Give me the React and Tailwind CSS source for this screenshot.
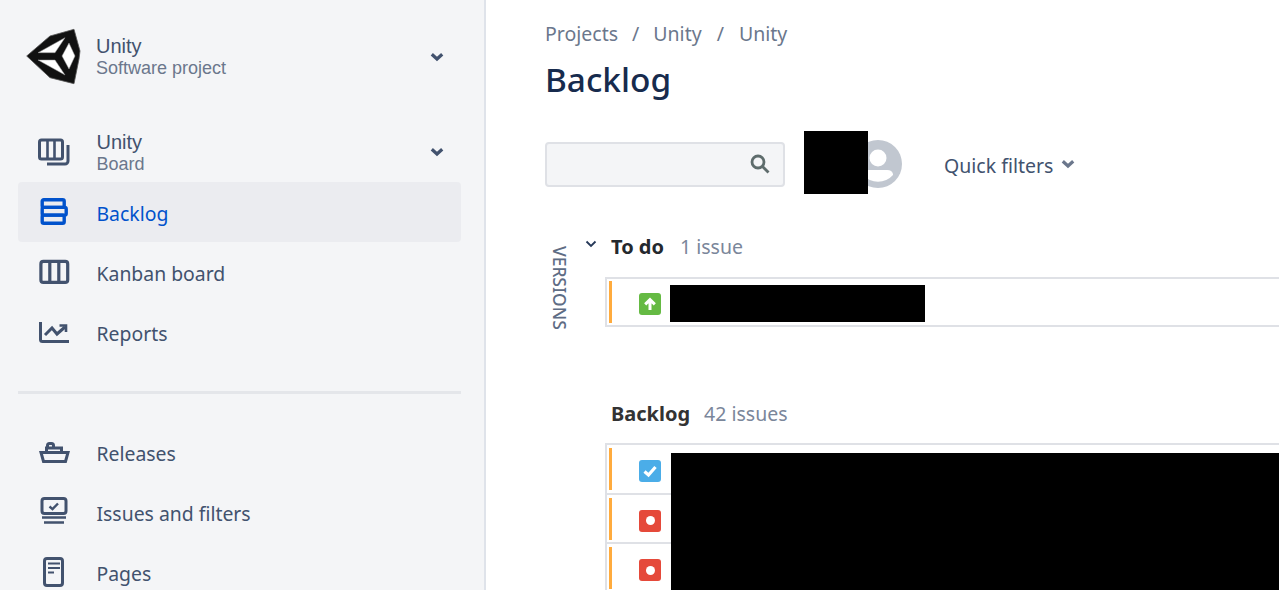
const UI = "font-['Noto_Sans',sans-serif]";
const ARIAL = "font-['Liberation_Sans',Arial,sans-serif]";

function UnityLogo() {
  return (
    <svg width="58" height="60" viewBox="0 0 58 60" className="shrink-0">
      <path d="M0.7 29 L24 9 L48 2.3 L54 24 L53 32 L48 56.7 L24 50.7 Z" fill="#111" stroke="#555" strokeWidth="0.8" />
      <path d="M12 25.7 L39 10.7 L29 25.7 Z" fill="#fff" stroke="#999" strokeWidth="0.5" />
      <path d="M12 33 L29 33 L39 48 Z" fill="#fff" stroke="#999" strokeWidth="0.5" />
      <path d="M36 29 L43 16 L49 29 L43 42 Z" fill="#fff" stroke="#999" strokeWidth="0.5" />
    </svg>
  );
}

function Chevron({ className = "", color = "#42526e" }) {
  return (
    <svg width="14" height="10" viewBox="0 0 14 10" className={className}>
      <path d="M1.8 2.2 L7 7 L12.2 2.2" fill="none" stroke={color} strokeWidth="3.2" />
    </svg>
  );
}

const ICON_PROPS = {
  width: 32,
  height: 32,
  viewBox: "0 0 32 32",
  fill: "none",
  stroke: "#42526e",
  strokeWidth: 3,
};

function BoardIcon() {
  return (
    <svg {...ICON_PROPS}>
      <rect x="1.5" y="4" width="23" height="19" rx="2" />
      <path d="M9.5 4v19M16.5 4v19" strokeWidth="2.6" />
      <path d="M30 9v16a3 3 0 0 1-3 3H9" />
    </svg>
  );
}

function BacklogIcon() {
  return (
    <svg {...ICON_PROPS} stroke="#0052cc" strokeWidth="3.4">
      <rect x="4.2" y="3.7" width="22" height="7.7" rx="1.6" />
      <rect x="4.2" y="11.4" width="24" height="7.7" rx="1.6" />
      <rect x="4.2" y="19.1" width="22" height="8.2" rx="1.6" />
    </svg>
  );
}

function KanbanIcon() {
  return (
    <svg {...ICON_PROPS} strokeWidth="3.2">
      <rect x="2.9" y="5.4" width="26.8" height="21" rx="2.5" />
      <path d="M11.8 5.4v21M20.8 5.4v21" />
    </svg>
  );
}

function ReportsIcon() {
  return (
    <svg {...ICON_PROPS}>
      <path d="M2.5 6v17.5a2 2 0 0 0 2 2H31" />
      <path d="M7 19l7-7 5 6 8-7" />
      <path d="M21.5 9.5h6.5v6.5" strokeWidth="2.6" />
    </svg>
  );
}

function ReleasesIcon() {
  return (
    <svg {...ICON_PROPS}>
      <path d="M3 16.5h27l-2.5 9H5.5z" />
      <path d="M8.5 16.5v-4.5h15v4.5" />
      <path d="M9.5 12V9.5a2 2 0 0 1 2-2h2a2 2 0 0 1 2 2V12" />
    </svg>
  );
}

function IssuesIcon() {
  return (
    <svg {...ICON_PROPS}>
      <rect x="4" y="2.5" width="24" height="15" rx="2.5" />
      <path d="M11.5 10.5l3 2.6 5.5-5.6" strokeWidth="2.4" />
      <path d="M4 21.5h24M6 26.5h20" strokeWidth="2.4" />
    </svg>
  );
}

function PagesIcon() {
  return (
    <svg {...ICON_PROPS}>
      <rect x="6.5" y="2.5" width="18" height="27" rx="2.5" />
      <path d="M10 7.5h12M10 12h12M10 16.5h6" strokeWidth="2.2" />
    </svg>
  );
}

function NavItem({ icon, label, active }) {
  return (
    <div
      className={`h-[60px] flex items-center pl-[20px] rounded ${UI} text-[19.4px] ${
        active ? "bg-[#ebecf0] text-[#0052cc]" : "text-[#42526e]"
      }`}
    >
      <span className="w-[32px] h-[32px] shrink-0 flex items-center justify-center">{icon}</span>
      <span className="ml-[26.5px] pt-[4px]">{label}</span>
    </div>
  );
}

function IssueType({ color, children }) {
  return (
    <span
      className="w-[22px] h-[22px] rounded-[3px] flex items-center justify-center"
      style={{ backgroundColor: color }}
    >
      {children}
    </span>
  );
}

function IssueRow({ type, height }) {
  return (
    <div className={`${height} flex items-center pl-[2px] border-b-2 border-[#dfe1e6]`}>
      <span className="w-[3px] h-[42px] bg-[#ffab3d]" />
      <span className="ml-[27px] mt-[4px]">{type}</span>
    </div>
  );
}

const upIcon = (
  <IssueType color="#65ba43">
    <svg width="14" height="14" viewBox="0 0 14 14">
      <path d="M7 13V3M2.2 7.4L7 2.6 11.8 7.4" fill="none" stroke="#fff" strokeWidth="3" />
    </svg>
  </IssueType>
);
const taskIcon = (
  <IssueType color="#4bade8">
    <svg width="16" height="14" viewBox="0 0 16 14">
      <path d="M2.5 7.5L6.5 11 13.5 3" fill="none" stroke="#fff" strokeWidth="3.2" />
    </svg>
  </IssueType>
);
const bugIcon = (
  <IssueType color="#e5493a">
    <span className="w-[9px] h-[9px] rounded-full bg-white" />
  </IssueType>
);

export default function App() {
  return (
    <div className="w-[1279px] h-[590px] flex overflow-hidden bg-white">
      <aside className="w-[486px] shrink-0 bg-[#f4f5f7] border-r-2 border-[#dfe3ea] pl-[18px] pr-[23px]">
        <div className="h-[62px] mt-[26px] flex items-center pl-[8px]">
          <UnityLogo />
          <div className={`ml-[12px] flex-1 ${ARIAL} leading-[22px]`}>
            <div className="text-[20px] text-[#42526e]">Unity</div>
            <div className="text-[18px] text-[#6b778c]">Software project</div>
          </div>
          <Chevron className="mr-[17px]" />
        </div>

        <div className="h-[60px] mt-[34px] flex items-center pl-[20px]">
          <span className="w-[32px] h-[32px] shrink-0 flex items-center justify-center">
            <BoardIcon />
          </span>
          <div className={`ml-[26.5px] pt-[2px] flex-1 ${ARIAL} leading-[22px]`}>
            <div className="text-[20px] text-[#42526e]">Unity</div>
            <div className="text-[18px] text-[#6b778c]">Board</div>
          </div>
          <Chevron className="mr-[17px]" />
        </div>

        <NavItem icon={<BacklogIcon />} label="Backlog" active />
        <NavItem icon={<KanbanIcon />} label="Kanban board" />
        <NavItem icon={<ReportsIcon />} label="Reports" />

        <div className="h-[3px] bg-[#e4e6ea] mt-[29px] mb-[28px]" />

        <NavItem icon={<ReleasesIcon />} label="Releases" />
        <NavItem icon={<IssuesIcon />} label="Issues and filters" />
        <NavItem icon={<PagesIcon />} label="Pages" />
      </aside>

      <main className={`flex-1 min-w-0 pl-[59px] ${UI}`}>
        <div className="mt-[20px] h-[28px] flex items-center text-[19.5px] text-[#6b778c]">
          <span>Projects</span>
          <span className="mx-[14px]">/</span>
          <span>Unity</span>
          <span className="mx-[15px]">/</span>
          <span>Unity</span>
        </div>
        <h1 className="mt-[8px] h-[46px] leading-[46px] text-[33.4px] font-medium text-[#172b4d]">Backlog</h1>

        <div className="mt-[28px] flex items-center h-[64px]">
          <div className="mt-[4px] w-[240px] h-[45px] bg-[#f4f5f7] border-2 border-[#dfe1e6] rounded-[4px] flex items-center justify-end pr-[12px]">
            <svg width="22" height="22" viewBox="0 0 22 22" fill="none" stroke="#5e6c6c" strokeWidth="2.8">
              <circle cx="9" cy="9" r="6" />
              <path d="M13.5 13.5L19.5 19.5" />
            </svg>
          </div>
          <div className="relative ml-[19px] w-[98px] h-[63px] flex items-center justify-end">
            <svg width="48" height="48" viewBox="0 0 48 48" className="mt-[3px]">
              <circle cx="24" cy="24" r="24" fill="#c1c7d0" />
              <circle cx="24" cy="18" r="8.5" fill="#fff" />
              <path d="M9 34a6 5 0 0 1 6-4h18a6 5 0 0 1 6 4v1a20 20 0 0 1-30 0z" fill="#fff" />
            </svg>
            <div className="absolute left-0 top-0 w-[64px] h-[63px] bg-black" />
          </div>
          <div className="ml-[42px] mt-[8px] flex items-center text-[19.5px] text-[#42526e]">
            Quick filters
            <Chevron className="ml-[8px] -mt-[4px]" color="#6b778c" />
          </div>
        </div>

        <div className="mt-[37px] flex">
          <div className="w-[40px] shrink-0 pt-[15px] pl-[6px]">
            <span className="[writing-mode:vertical-rl] text-[17.4px] font-medium leading-[18px] text-[#5e6c84]">VERSIONS</span>
          </div>
          <div className="w-[800px] shrink-0">
            <div className="h-[32px] flex items-center">
              <svg width="12" height="8" viewBox="0 0 12 8" className="-mt-[6px]">
                <path d="M1.5 1.5L6 6l4.5-4.5" fill="none" stroke="#253858" strokeWidth="1.8" />
              </svg>
              <span className="ml-[14px] text-[20px] font-bold text-[#24292e]">To do</span>
              <span className="ml-[16px] text-[19.5px] text-[#7a869a]">1 issue</span>
            </div>
            <div className="relative ml-[20px] mt-[14px] border-2 border-[#dfe1e6] h-[50px] box-border">
              <div className="h-[46px] flex items-center pl-[2px]">
                <span className="w-[3px] h-[42px] bg-[#ffab3d]" />
                <span className="ml-[27px] mt-[4px]">{upIcon}</span>
                <div className="ml-[9px] mt-[2px] w-[255px] h-[37px] bg-black" />
              </div>
            </div>

            <div className="mt-[70px] ml-[26px] pt-[2px] h-[32px] flex items-center">
              <span className="text-[20px] font-bold text-[#333333]">Backlog</span>
              <span className="ml-[14px] text-[19.5px] text-[#7a869a]">42 issues</span>
            </div>
            <div className="relative ml-[20px] mt-[14px] border-t-2 border-l-2 border-[#dfe1e6]">
              <IssueRow type={taskIcon} height="h-[50px]" />
              <IssueRow type={bugIcon} height="h-[49px]" />
              <IssueRow type={bugIcon} height="h-[50px]" />
              <div className="absolute left-[64px] top-[8px] w-[700px] h-[150px] bg-black" />
            </div>
          </div>
        </div>
      </main>
    </div>
  );
}
